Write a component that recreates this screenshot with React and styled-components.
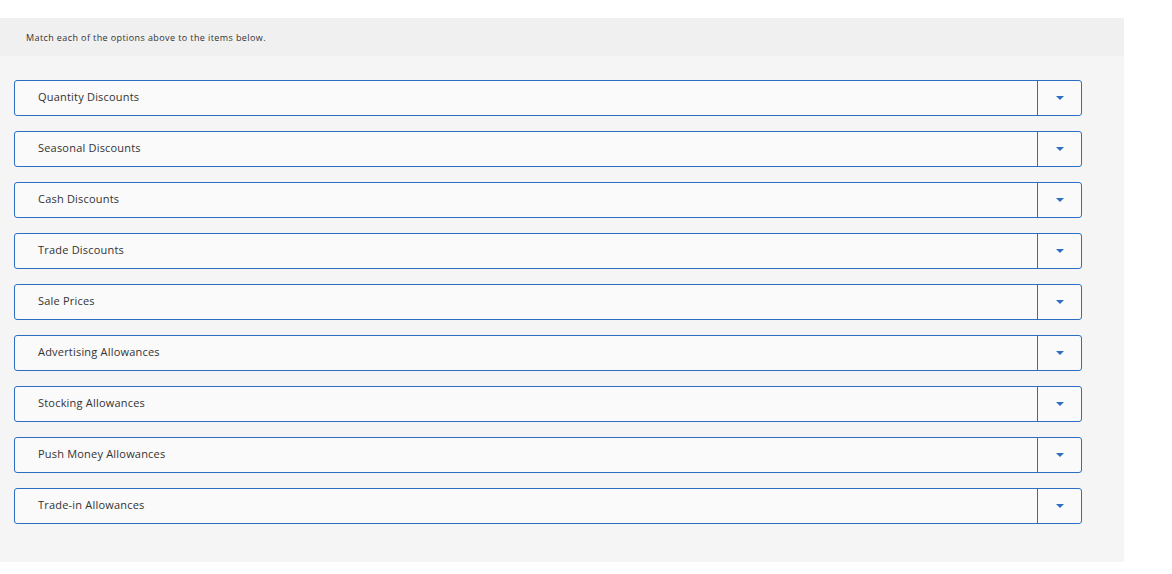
import React from "react";
import styled, { createGlobalStyle } from "styled-components";

const Global = createGlobalStyle`
  html, body { margin: 0; padding: 0; background: #ffffff; }
  body { font-family: "Open Sans", "Liberation Sans", sans-serif; }
`;

const Page = styled.div`
  padding-top: 18px;
  width: 1124px;
`;

const Panel = styled.div`
  background: #f5f5f5;
  padding-bottom: 38px;
`;

const Header = styled.div`
  background: #f0f0f0;
  height: 38px;
  display: flex;
  align-items: center;
  padding-left: 26px;
  font-size: 9px;
  letter-spacing: 0.4px;
  color: #333333;
`;

const List = styled.div`
  display: flex;
  flex-direction: column;
  gap: 15px;
  padding: 24px 42px 0 14px;
`;

const Row = styled.div`
  display: flex;
  height: 36px;
  box-sizing: border-box;
  border: 1px solid #2d6ec1;
  border-radius: 3px;
  background: #fafafa;
`;

const Label = styled.div`
  flex: 1;
  display: flex;
  align-items: center;
  padding: 0 0 3px 23px;
  font-size: 11px;
  letter-spacing: 0.2px;
  color: #333333;
  border-right: 1px solid #2d6ec1;
`;

const Toggle = styled.div`
  width: 43px;
  display: flex;
  align-items: center;
  justify-content: center;
`;

const Arrow = styled.span`
  width: 0;
  height: 0;
  border-left: 4px solid transparent;
  border-right: 4px solid transparent;
  border-top: 4px solid #2d6ec1;
  margin-left: 1px;
`;

const items = [
  "Quantity Discounts",
  "Seasonal Discounts",
  "Cash Discounts",
  "Trade Discounts",
  "Sale Prices",
  "Advertising Allowances",
  "Stocking Allowances",
  "Push Money Allowances",
  "Trade-in Allowances",
];

export default function App() {
  return (
    <>
      <Global />
      <Page>
        <Panel>
          <Header>Match each of the options above to the items below.</Header>
          <List>
            {items.map((t) => (
              <Row key={t}>
                <Label>{t}</Label>
                <Toggle>
                  <Arrow />
                </Toggle>
              </Row>
            ))}
          </List>
        </Panel>
      </Page>
    </>
  );
}
